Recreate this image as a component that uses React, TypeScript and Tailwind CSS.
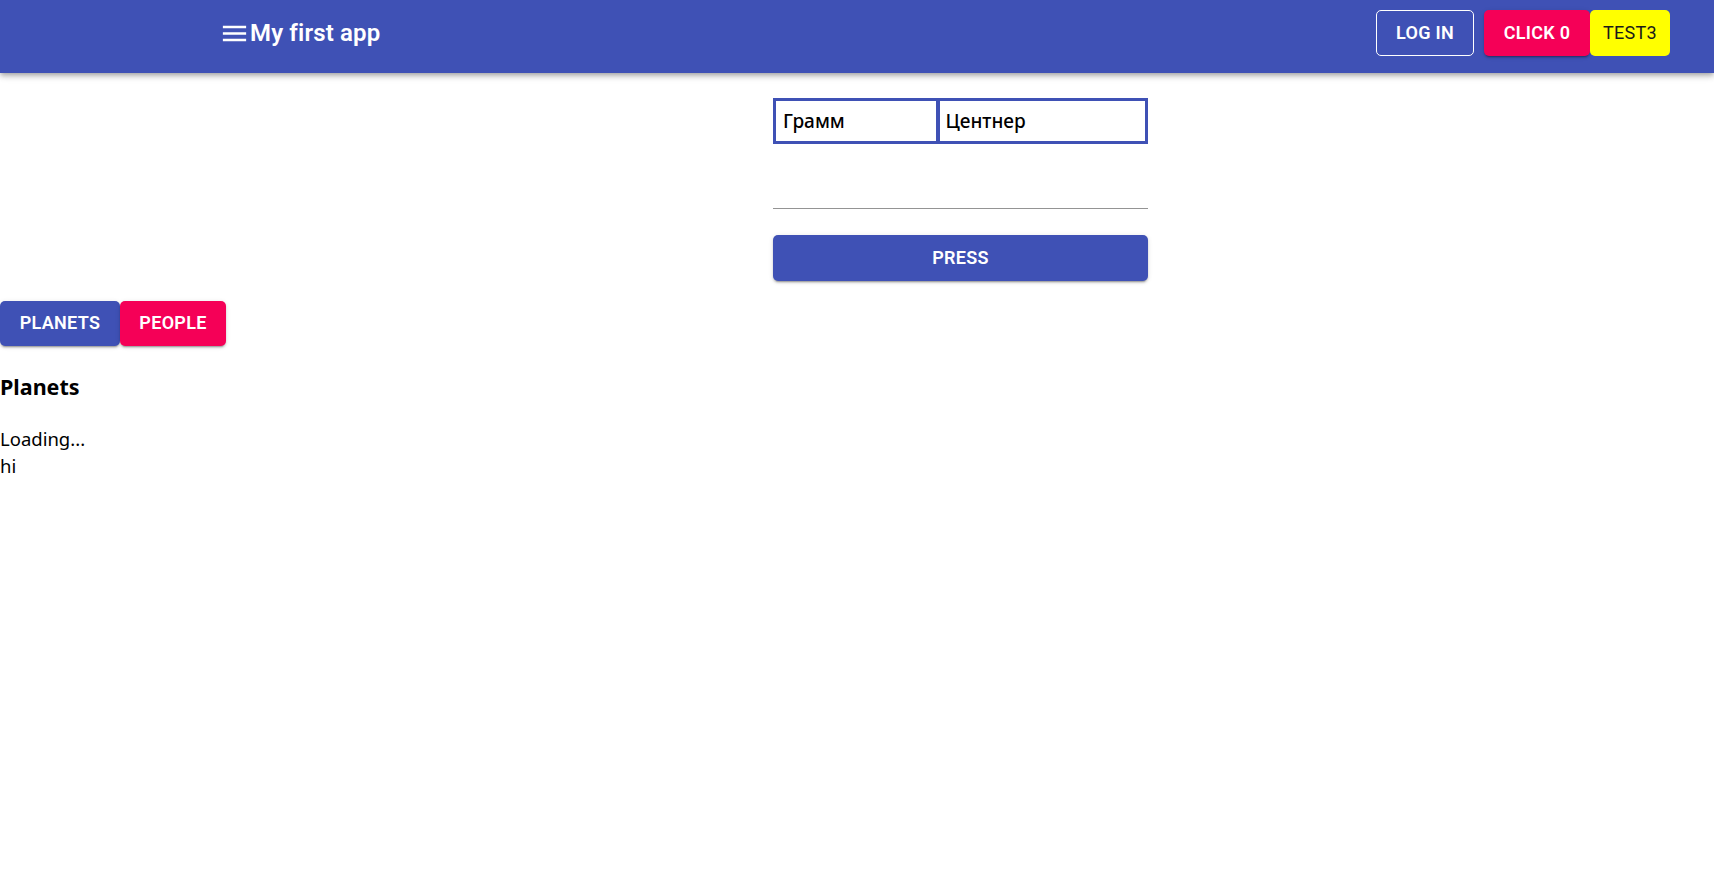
import { useState } from 'react'

const shadowBtn =
  'shadow-[0_3px_1px_-2px_rgba(0,0,0,0.2),0_2px_2px_0_rgba(0,0,0,0.14),0_1px_5px_0_rgba(0,0,0,0.12)]'

function MenuIcon() {
  return (
    <svg viewBox="0 0 24 24" className="w-[31px] h-[31px] fill-white">
      <path d="M3 18h18v-2H3v2zm0-5h18v-2H3v2zm0-7v2h18V6H3z" />
    </svg>
  )
}

export default function App() {
  const [count, setCount] = useState(0)
  const [tab, setTab] = useState<'planets' | 'people'>('planets')

  return (
    <div className="min-h-screen bg-white font-['Noto_Sans',sans-serif] text-[18.5px] leading-[27px] text-black">
      <header className="h-[73px] bg-[#3f51b5] flex items-center pb-[7px] pl-[219px] pr-[44px] shadow-[0_2px_4px_-1px_rgba(0,0,0,0.2),0_4px_5px_0_rgba(0,0,0,0.14),0_1px_10px_0_rgba(0,0,0,0.12)] font-['Roboto',sans-serif] text-white relative z-10">
        <MenuIcon />
        <h1 className="text-[24px] font-semibold tracking-[0.15px] leading-none">My first app</h1>
        <div className="ml-auto flex items-center">
          <button className="w-[98px] h-[46px] pb-[2px] border border-white rounded-[5px] text-[18px] font-semibold uppercase tracking-[0.3px]">
            Log in
          </button>
          <button
            onClick={() => setCount(count + 1)}
            className={`ml-[10px] w-[106px] h-[46px] pb-[2px] bg-[#f50057] rounded-[5px] text-[18px] font-semibold uppercase tracking-[0.3px] ${shadowBtn}`}
          >
            Click {count}
          </button>
          <button className="w-[80px] h-[46px] pb-[2px] bg-[#ffff00] rounded-[5px] text-[18px] font-normal uppercase tracking-[0.3px] text-[#1a1a1a]">
            Test3
          </button>
        </div>
      </header>

      <main>
        <div className="ml-[773px] w-[375px] pt-[25px]">
          <table className="w-full h-[46px] border-collapse border-[3px] border-[#3f51b5]">
            <tbody>
              <tr>
                <th className="w-[163px] text-left font-medium text-[19px] px-[7px] border-r-[4px] border-[#3f51b5]">Грамм</th>
                <th className="text-left font-medium text-[19px] px-[6px]">Центнер</th>
              </tr>
            </tbody>
          </table>
          <div className="h-[65px] border-b border-[#949494]" />
          <button
            className={`mt-[26px] w-full h-[46px] pb-[2px] bg-[#3f51b5] text-white rounded-[5px] font-['Roboto',sans-serif] text-[18px] font-semibold uppercase tracking-[0.3px] ${shadowBtn}`}
          >
            Press
          </button>
        </div>

        <div className="mt-[20px] flex">
          <button
            onClick={() => setTab('planets')}
            className={`w-[120px] h-[45px] pb-[2px] bg-[#3f51b5] text-white rounded-[5px] font-['Roboto',sans-serif] text-[18px] font-semibold uppercase tracking-[0.3px] ${shadowBtn}`}
          >
            Planets
          </button>
          <button
            onClick={() => setTab('people')}
            className={`w-[106px] h-[45px] pb-[2px] bg-[#f50057] text-white rounded-[5px] font-['Roboto',sans-serif] text-[18px] font-semibold uppercase tracking-[0.3px] ${shadowBtn}`}
          >
            People
          </button>
        </div>

        <h3 className="mt-[28px] text-[21.5px] leading-[26px] font-bold">{tab === 'planets' ? 'Planets' : 'People'}</h3>
        <div className="mt-[25px]">
          <p>Loading...</p>
          <p>hi</p>
        </div>
      </main>
    </div>
  )
}
